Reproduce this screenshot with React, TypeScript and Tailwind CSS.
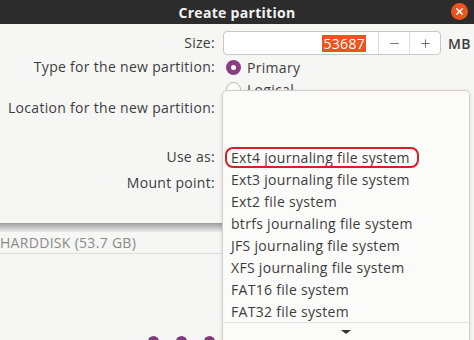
import { X, Minus, Plus } from "lucide-react";

const fsTypes = [
  "Ext4 journaling file system",
  "Ext3 journaling file system",
  "Ext2 file system",
  "btrfs journaling file system",
  "JFS journaling file system",
  "XFS journaling file system",
  "FAT16 file system",
  "FAT32 file system",
];

const App = () => {
  const font = "font-['Open_Sans','Noto_Sans',sans-serif]";

  return (
    <div className={`relative w-[474px] h-[340px] overflow-hidden bg-[#f6f6f5] text-[14px] tracking-[0.3px] text-[#3d3d3d] ${font}`}>
      {/* title bar */}
      <div className="relative flex h-6 items-center justify-center bg-[#2c2c2c]">
        <span className="text-[14px] font-bold tracking-[0.3px] text-[#f2f2f2]">Create partition</span>
        <div className="absolute right-[6px] top-[3px] flex h-[17px] w-[17px] items-center justify-center rounded-full bg-[#e9541f]">
          <X className="h-[11px] w-[11px] text-white" strokeWidth={3} />
        </div>
      </div>

      {/* dialog body */}
      <div className="flex h-[199px]">
        <div className="flex w-[215px] flex-col items-end pt-[7px] leading-none">
          <div className="flex h-6 items-center">Size:</div>
          <div className="mt-[1px] flex h-[22px] items-center">Type for the new partition:</div>
          <div className="mt-[19px] flex h-[22px] items-center">Location for the new partition:</div>
          <div className="mt-[27px] flex h-[22px] items-center">Use as:</div>
          <div className="mt-[4px] flex h-[22px] items-center">Mount point:</div>
        </div>

        <div className="ml-2 flex flex-col pt-[7px]">
          <div className="flex items-center">
            <div className="flex h-6 w-[218px] items-center rounded-[4px] border border-[#cdc7c2] bg-white">
              <div className="flex flex-1 justify-end pr-[12px]">
                <span className="bg-[#e9541f] px-[1px] leading-[17px] text-white">53687</span>
              </div>
              <div className="flex h-full w-[31px] items-center justify-center border-l border-[#e2ded9]">
                <Minus className="h-[13px] w-[13px] text-[#555]" strokeWidth={1.5} />
              </div>
              <div className="flex h-full w-[31px] items-center justify-center border-l border-[#e2ded9]">
                <Plus className="h-[13px] w-[13px] text-[#555]" strokeWidth={1.5} />
              </div>
            </div>
            <span className="ml-[7px] font-semibold">MB</span>
          </div>
          <div className="mt-[1px] flex h-[22px] items-center gap-[6px] pl-[3px]">
            <span className="flex h-[15px] w-[15px] items-center justify-center rounded-full bg-[#8a3d81]">
              <span className="h-[5px] w-[5px] rounded-full bg-white" />
            </span>
            <span>Primary</span>
          </div>
          <div className="flex h-[22px] items-center gap-[6px] pl-[3px]">
            <span className="h-[15px] w-[15px] rounded-full border border-[#bcb6b0] bg-white" />
            <span>Logical</span>
          </div>
        </div>
      </div>

      {/* parent window behind the dialog */}
      <div className="h-[9px] w-[222px] bg-gradient-to-b from-[#9d9d9d] to-[#ececec]" />
      <div className="flex h-[22px] w-[222px] items-center border-b border-[#dcdcdc] text-[14px] text-[#8a8a8a]">
        <span>HARDDISK (53.7 GB)</span>
      </div>
      <div className="mt-[82px] flex w-[222px] justify-start gap-[17px] pl-[148px]">
        <span className="h-[11px] w-[11px] rounded-full bg-[#7f3a78]" />
        <span className="h-[11px] w-[11px] rounded-full bg-[#7f3a78]" />
        <span className="h-[11px] w-[11px] rounded-full bg-[#7f3a78]" />
      </div>

      {/* combo popup */}
      <div className="absolute left-[222px] top-[90px] w-[248px] rounded-t-[5px] border border-[#d2cdc8] bg-[#fbfbfa] shadow-[0_1px_4px_rgba(0,0,0,0.12)]">
        <div className="h-[55px]" />
        {fsTypes.map((t, i) => (
          <div key={t} className="relative flex h-[22px] items-center pl-[8px]">
            {i === 0 && (
              <div className="absolute left-[2px] top-[1px] h-[21px] w-[194px] rounded-[8px] border-2 border-[#d3202a]" />
            )}
            <span>{t}</span>
          </div>
        ))}
        <div className="flex h-[30px] justify-center border-t border-[#e4e0dc] pt-[7px]">
          <span className="h-0 w-0 border-x-[5px] border-t-[4px] border-x-transparent border-t-[#333]" />
        </div>
      </div>
    </div>
  );
};

export default App;
